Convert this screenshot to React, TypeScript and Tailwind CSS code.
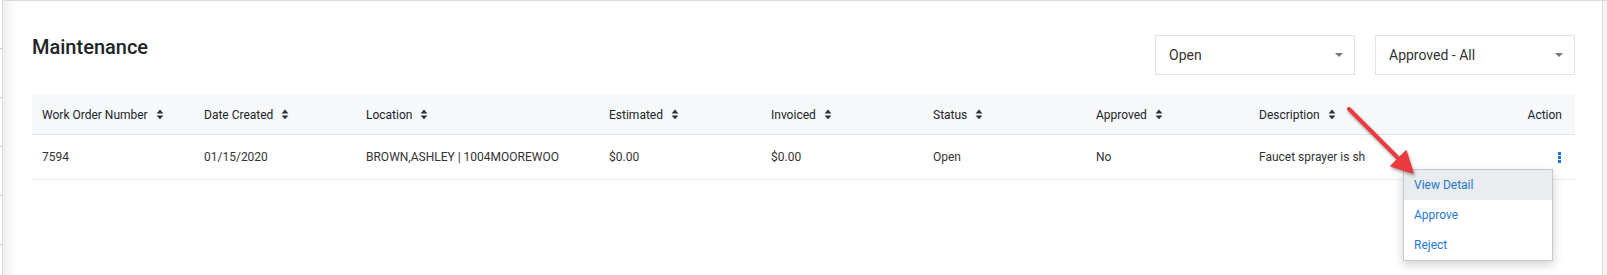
import React from 'react';

const columns = [
  'Work Order Number',
  'Date Created',
  'Location',
  'Estimated',
  'Invoiced',
  'Status',
  'Approved',
  'Description',
];

const row = [
  '7594',
  '01/15/2020',
  'BROWN,ASHLEY | 1004MOOREWOO',
  '$0.00',
  '$0.00',
  'Open',
  'No',
  'Faucet sprayer is sh',
];

function SortIcon() {
  return (
    <svg width="8" height="11" viewBox="0 0 8 11" className="ml-2 shrink-0" fill="#2b2f33">
      <path d="M0.6 4.4 L4 0.6 L7.4 4.4 Z" />
      <path d="M0.6 6.4 L4 10.3 L7.4 6.4 Z" />
    </svg>
  );
}

function Select({ label }: { label: string }) {
  return (
    <div className="w-[200px] h-[40px] border border-[#e2e2e2] bg-white flex items-center justify-between pl-[13px] pr-[11px]">
      <span className="text-[14px] text-[#333]">{label}</span>
      <svg width="8" height="4" viewBox="0 0 8 4" fill="#777">
        <path d="M0 0 L8 0 L4 4 Z" />
      </svg>
    </div>
  );
}

export default function App() {
  const gridCols = 'grid grid-cols-[162px_162px_243px_162px_162px_163px_163px_1fr_1fr]';

  return (
    <div
      className="relative w-[1607px] h-[275px] flex bg-white overflow-hidden"
      style={{ fontFamily: 'Roboto, "Liberation Sans", sans-serif' }}
    >
      {/* left neighbour edge with row ticks */}
      <div className="w-[2px] shrink-0 flex flex-col">
        {[0, 1, 2, 3, 4].map(i => (
          <div key={i} className="h-[49px] border-b border-[#cfcfcf]" />
        ))}
      </div>

      <div className="relative w-[1601px] shrink-0 border-l border-r border-t border-[#dcdcdc] pl-[29px] pr-[27px] pt-[34px]">
        <div className="pointer-events-none absolute left-0 top-0 bottom-0 w-[14px] bg-gradient-to-r from-[#f0f0f0] to-white" />

        <div className="relative flex items-start justify-between">
          <h1 className="text-[20px] leading-[24px] font-medium text-[#212529]">Maintenance</h1>
          <div className="flex gap-[20px]">
            <Select label="Open" />
            <Select label="Approved - All" />
          </div>
        </div>

        <div className="relative mt-[20px] text-[12px]">
          <div className={`${gridCols} h-[40px] bg-[#f7f8fa] border-b border-[#e1e4e8] text-[#212529]`}>
            {columns.map(c => (
              <div key={c} className="flex items-center pl-[10px]">
                <span>{c}</span>
                <SortIcon />
              </div>
            ))}
            <div className="flex items-center justify-end pr-[13px]">Action</div>
          </div>

          <div className={`${gridCols} h-[45px] border-b border-[#e9edf0] text-[#333]`}>
            {row.map((v, i) => (
              <div key={i} className="flex items-center pl-[10px] whitespace-nowrap overflow-hidden">
                {v}
              </div>
            ))}
            <div className="flex items-center justify-end pr-[14px]">
              <div className="flex flex-col gap-[1px]">
                <span className="w-[3px] h-[3px] bg-[#1a73e8]" />
                <span className="w-[3px] h-[3px] bg-[#1a73e8]" />
                <span className="w-[3px] h-[3px] bg-[#1a73e8]" />
              </div>
            </div>
          </div>
        </div>
      </div>

      <div className="flex-1 bg-[#f4f4f4] border-t border-[#dcdcdc]" />

      {/* action dropdown */}
      <div className="absolute left-[1403px] top-[169px] w-[150px] bg-white border border-[#c8c8c8] shadow-[0_4px_10px_rgba(0,0,0,0.18)] text-[12px] text-[#1f78d1]">
        <div className="h-[30px] flex items-center pl-[10px] bg-[#e9edef]">View Detail</div>
        <div className="h-[30px] flex items-center pl-[10px]">Approve</div>
        <div className="h-[30px] flex items-center pl-[10px]">Reject</div>
      </div>

      {/* annotation arrow */}
      <svg
        className="pointer-events-none absolute left-0 top-0 drop-shadow-[1px_2px_1.5px_rgba(0,0,0,0.35)]"
        width="1607"
        height="275"
      >
        <line x1="1349" y1="109" x2="1400" y2="160" stroke="#e83a3f" strokeWidth="4" strokeLinecap="round" />
        <path d="M1413 173 L1391 166 L1406 151 Z" fill="#e83a3f" stroke="#e83a3f" strokeWidth="1.5" strokeLinejoin="round" />
      </svg>
    </div>
  );
}
